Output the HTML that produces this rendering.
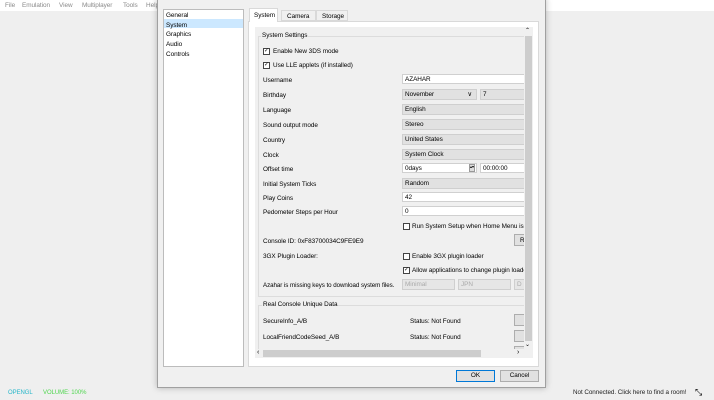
<!DOCTYPE html>
<html><head><style>
*{margin:0;padding:0;box-sizing:border-box}
body{width:714px;height:400px;overflow:hidden;background:#efefef;font-family:"Liberation Sans",sans-serif;font-size:6.4px;letter-spacing:-0.05px;color:#000;position:relative}
.a{position:absolute;white-space:nowrap}
.menu{left:0;top:0;width:714px;height:11px;background:#fff}
.menu span{position:absolute;top:2px;color:#8a8a8a}
.dlg{left:157px;top:-2px;width:389px;height:390px;background:#f0f0f0;border:1px solid #a0a0a0;box-shadow:0 0 6px rgba(0,0,0,.25)}
.in{position:absolute;border:1px solid #d0d0d0;background:#fff;height:10px;padding-left:2px;line-height:9px}
.cb{position:absolute;border:1px solid #cfcfcf;background:#e1e1e1;height:11px;padding-left:2px;line-height:10px}
.chk{position:absolute;width:7px;height:7px;border:1px solid #444;background:#fff;font-size:6px;line-height:5px;text-align:center;color:#222}
.lbl{position:absolute;white-space:nowrap}
.btn{position:absolute;border:1px solid #adadad;background:#e1e1e1;text-align:center}
</style></head><body>
<div class="a menu"><span style="left:5px">File</span><span style="left:22px">Emulation</span><span style="left:59px">View</span><span style="left:82px">Multiplayer</span><span style="left:123px">Tools</span><span style="left:146px">Help</span></div>
<div class="a" style="left:8px;top:390px;color:#27b6c9;font-size:6px">OPENGL</div>
<div class="a" style="left:43px;top:390px;color:#4fd64f;font-size:6px">VOLUME: 100%</div>
<div class="a" style="left:573px;top:389px;color:#222;font-size:6.3px">Not Connected. Click here to find a room!</div>
<div class="a" style="left:695px;top:387px;font-size:9px">&#x2921;</div>

<div class="a dlg"></div>
<div class="a" style="left:163px;top:9px;width:81px;height:358px;background:#fff;border:1px solid #bcbcbc"></div>
<div class="a" style="left:164px;top:19px;width:79px;height:9px;background:#cce8ff"></div>
<div class="a" style="left:166px;top:11px;line-height:9.7px">General<br>System<br>Graphics<br>Audio<br>Controls</div>

<div class="a" style="left:248px;top:21px;width:291px;height:346px;background:#fff;border:1px solid #d9d9d9"></div>
<div class="a" style="left:249px;top:8px;width:29px;height:14px;background:#fff;border:1px solid #d9d9d9;border-bottom:none;padding:3px 0 0 4px">System</div>
<div class="a" style="left:281px;top:10px;width:35px;height:11px;background:#f0f0f0;border:1px solid #d9d9d9;padding:2px 0 0 5px">Camera</div>
<div class="a" style="left:316px;top:10px;width:32px;height:11px;background:#f0f0f0;border:1px solid #d9d9d9;padding:2px 0 0 5px">Storage</div>

<div class="a" style="left:255px;top:27px;width:278px;height:331px;background:#f0f0f0;overflow:hidden">
<div class="a" style="left:3px;top:9px;width:270px;height:261px;border:1px solid #dcdcdc;border-right:none"></div>
<div class="a" style="left:6px;top:5px;background:#f0f0f0;padding:0 1px">System Settings</div>
</div>
<div class="a" style="left:255px;top:27px;width:269px;height:322px;overflow:hidden">
<div style="position:relative;left:-255px;top:-25px">
<div class="chk" style="left:263px;top:46px">✓</div><div class="lbl" style="left:273px;top:46px">Enable New 3DS mode</div>
<div class="chk" style="left:263px;top:60px">✓</div><div class="lbl" style="left:273px;top:60px">Use LLE applets (if installed)</div>
<div class="lbl" style="left:263px;top:75px">Username</div><div class="in" style="left:402px;top:72px;width:130px">AZAHAR</div>
<div class="lbl" style="left:263px;top:90px">Birthday</div><div class="cb" style="left:402px;top:87px;width:75px">November<span style="position:absolute;right:4px">&#x2228;</span></div><div class="cb" style="left:480px;top:87px;width:50px">7</div>
<div class="lbl" style="left:263px;top:105px">Language</div><div class="cb" style="left:402px;top:102px;width:130px">English</div>
<div class="lbl" style="left:263px;top:120px">Sound output mode</div><div class="cb" style="left:402px;top:117px;width:130px">Stereo</div>
<div class="lbl" style="left:263px;top:135px">Country</div><div class="cb" style="left:402px;top:132px;width:130px">United States</div>
<div class="lbl" style="left:263px;top:150px">Clock</div><div class="cb" style="left:402px;top:147px;width:130px">System Clock</div>
<div class="lbl" style="left:263px;top:164px">Offset time</div><div class="in" style="left:402px;top:161px;width:75px">0days<span style="position:absolute;right:1px;top:0;width:6px;height:8px;background:#ddd;border:1px solid #999;font-size:4px;line-height:3px;text-align:center">▴▾</span></div><div class="in" style="left:480px;top:161px;width:50px">00:00:00</div>
<div class="lbl" style="left:263px;top:179px">Initial System Ticks</div><div class="cb" style="left:402px;top:176px;width:130px">Random</div>
<div class="lbl" style="left:263px;top:193px">Play Coins</div><div class="in" style="left:402px;top:190px;width:130px">42</div>
<div class="lbl" style="left:263px;top:207px">Pedometer Steps per Hour</div><div class="in" style="left:402px;top:204px;width:130px">0</div>
<div class="chk" style="left:403px;top:221px"></div><div class="lbl" style="left:412px;top:221px">Run System Setup when Home Menu is launched</div>
<div class="lbl" style="left:263px;top:236px">Console ID: 0xF83700034C9FE9E9</div><div class="btn" style="left:514px;top:232px;width:20px;height:12px;padding-top:2px">Re</div>
<div class="lbl" style="left:263px;top:251px">3GX Plugin Loader:</div>
<div class="chk" style="left:403px;top:251px"></div><div class="lbl" style="left:412px;top:251px">Enable 3GX plugin loader</div>
<div class="chk" style="left:403px;top:265px">✓</div><div class="lbl" style="left:412px;top:265px">Allow applications to change plugin loader state</div>
<div class="lbl" style="left:263px;top:280px;font-size:6.2px">Azahar is missing keys to download system files.</div>
<div class="cb" style="left:402px;top:277px;width:53px;color:#aaa;background:#e6e6e6">Minimal</div><div class="cb" style="left:458px;top:277px;width:53px;color:#aaa;background:#e6e6e6">JPN</div><div class="cb" style="left:514px;top:277px;width:20px;color:#aaa;background:#e6e6e6">D</div>
<div class="a" style="left:258px;top:303px;width:280px;height:60px;border-top:1px solid #dcdcdc;border-left:1px solid #dcdcdc"></div>
<div class="lbl" style="left:262px;top:299px;background:#f0f0f0;padding:0 1px">Real Console Unique Data</div>
<div class="lbl" style="left:263px;top:316px">SecureInfo_A/B</div><div class="lbl" style="left:410px;top:316px">Status: Not Found</div><div class="btn" style="left:514px;top:312px;width:20px;height:12px"></div>
<div class="lbl" style="left:263px;top:332px">LocalFriendCodeSeed_A/B</div><div class="lbl" style="left:410px;top:332px">Status: Not Found</div><div class="btn" style="left:514px;top:328px;width:20px;height:12px"></div>
<div class="lbl" style="left:263px;top:347px">OTP</div><div class="lbl" style="left:410px;top:347px">Status: Not Found</div><div class="btn" style="left:514px;top:344px;width:20px;height:12px"></div>
</div></div>
<div class="a" style="left:524px;top:27px;width:9px;height:322px;background:#f0f0f0"></div>
<div class="a" style="left:525px;top:36px;width:7px;height:305px;background:#cdcdcd"></div>
<div class="a" style="left:525px;top:27px;font-size:6px">&#x2303;</div>
<div class="a" style="left:525px;top:341px;font-size:6px">&#x2304;</div>
<div class="a" style="left:255px;top:349px;width:269px;height:9px;background:#f0f0f0"></div>
<div class="a" style="left:263px;top:350px;width:218px;height:7px;background:#cdcdcd"></div>
<div class="a" style="left:257px;top:349px;font-size:7px">&#x2039;</div>
<div class="a" style="left:517px;top:349px;font-size:7px">&#x203A;</div>

<div class="btn" style="left:456px;top:370px;width:39px;height:12px;border:1px solid #0078d7;line-height:10px">OK</div>
<div class="btn" style="left:500px;top:370px;width:39px;height:12px;line-height:10px">Cancel</div>
</body></html>
